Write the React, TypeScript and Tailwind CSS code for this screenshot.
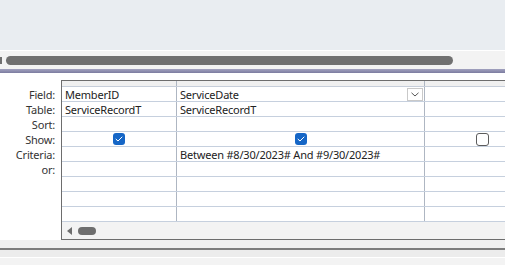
import type { ReactNode } from "react";

const labels = ["Field:", "Table:", "Sort:", "Show:", "Criteria:", "or:", "", "", ""];

function CheckBox({ checked }: { checked: boolean }) {
  if (checked) {
    return (
      <div className="flex h-[12px] w-[12px] items-center justify-center rounded-[3px] bg-[#1566c6]">
        <svg width="8" height="6" viewBox="0 0 8 6" fill="none">
          <path d="M1 3.2 L3 5 L7 1" stroke="white" strokeWidth="1" strokeLinecap="round" strokeLinejoin="round" />
        </svg>
      </div>
    );
  }
  return <div className="h-[13px] w-[13px] rounded-[3px] border border-[#5c5c5c] bg-white" />;
}

function Cell({ width, children, center }: { width: string; children?: ReactNode; center?: boolean }) {
  return (
    <div
      className={`flex h-full shrink-0 items-center border-r border-[#aeb6c2] px-[3px] ${width} ${
        center ? "justify-center" : ""
      }`}
    >
      {children}
    </div>
  );
}

export default function App() {
  const rows: { a?: ReactNode; b?: ReactNode; c?: ReactNode; center?: boolean }[] = [
    {
      a: "MemberID",
      b: (
        <div className="flex w-full items-center justify-between">
          <span>ServiceDate</span>
          <div className="mr-[-2px] flex h-[13px] w-[16px] items-center justify-center border border-[#c9c9c9] bg-white">
            <svg width="8" height="5" viewBox="0 0 8 5" fill="none">
              <path d="M0.5 0.8 L4 4 L7.5 0.8" stroke="#555" strokeWidth="1" />
            </svg>
          </div>
        </div>
      ),
    },
    { a: "ServiceRecordT", b: "ServiceRecordT" },
    {},
    { a: <CheckBox checked />, b: <CheckBox checked />, c: <CheckBox checked={false} />, center: true },
    { b: "Between #8/30/2023# And #9/30/2023#" },
    {},
    {},
    {},
    {},
  ];

  return (
    <div
      className="flex h-[265px] w-[505px] flex-col overflow-hidden bg-white text-[11px] tracking-[-0.2px] text-[#222]"
      style={{ fontFamily: '"Noto Sans", "Open Sans", sans-serif' }}
    >
      <div className="h-[50px] shrink-0 bg-[#e9edf1]" />
      <div className="h-[1px] shrink-0 bg-white" />
      <div className="flex h-[18px] shrink-0 items-center bg-[#f3f3f3]">
        <div className="h-[7px] w-[2px] bg-[#707070]" />
        <div className="ml-[4px] h-[9px] w-[447px] rounded-full bg-[#707070]" />
      </div>
      <div className="h-[4px] shrink-0 bg-gradient-to-b from-[#a2a2bf] to-[#7c7ca0]" />
      <div className="h-[7px] shrink-0 bg-white" />

      <div className="flex h-[160px] shrink-0">
        <div className="flex w-[61px] shrink-0 flex-col bg-white pt-[7px] text-[#333]">
          {labels.map((l, i) => (
            <div key={i} className="flex h-[15px] items-center justify-end pr-[6px] leading-none">
              {l}
            </div>
          ))}
        </div>
        <div className="flex flex-1 flex-col overflow-hidden border-y border-l border-[#6d6d6d]">
          <div className="flex h-[6px] shrink-0 border-b border-[#c6ceda] bg-[#f0f0f0]">
            <div className="w-[115px] shrink-0 border-r border-[#aeb6c2]" />
            <div className="w-[248px] shrink-0 border-r border-[#aeb6c2]" />
          </div>
          {rows.map((r, i) => (
            <div key={i} className="flex h-[15px] shrink-0 border-b border-[#c6d0de] leading-none">
              <Cell width="w-[115px]" center={r.center}>
                {r.a}
              </Cell>
              <Cell width="w-[248px]" center={r.center}>
                {r.b}
              </Cell>
              <Cell width="w-[116px]" center={r.center}>
                {r.c}
              </Cell>
            </div>
          ))}
          <div className="flex flex-1 items-center bg-[#f3f3f3] pl-[5px]">
            <svg width="6" height="8" viewBox="0 0 6 8">
              <path d="M5 0 L5 8 L0 4 Z" fill="#6e6e6e" />
            </svg>
            <div className="ml-[5px] h-[8px] w-[18px] rounded-full bg-[#6e6e6e]" />
          </div>
        </div>
      </div>

      <div className="h-[8px] shrink-0 bg-[#f0f0f0]" />
      <div className="h-[2px] shrink-0 bg-[#7d7d7d]" />
      <div className="h-[7px] shrink-0 bg-[#ececec]" />
      <div className="h-[1px] shrink-0 bg-white" />
      <div className="flex-1 bg-[#f3f3f3]" />
    </div>
  );
}
